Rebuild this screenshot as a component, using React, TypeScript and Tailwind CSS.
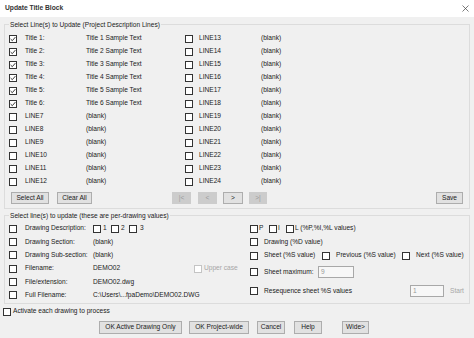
import React from "react";

function Box({ checked = false, size = "sm", disabled = false }: { checked?: boolean; size?: "sm" | "md"; disabled?: boolean }) {
  const sz = size === "sm" ? "w-[8px] h-[8px]" : "w-[8px] h-[8px]";
  const bd = disabled ? "border-[#c4c4c4]" : "border-[#333333]";
  return (
    <span className={`inline-flex shrink-0 items-center justify-center border bg-white ${sz} ${bd}`}>
      {checked && (
        <svg viewBox="0 0 6 6" className="w-[6px] h-[6px]">
          <path d="M0.6 3 L2.3 4.7 L5.4 1.1" fill="none" stroke="#222" strokeWidth="0.9" />
        </svg>
      )}
    </span>
  );
}

function Btn({ children, className = "", disabled = false }: { children: React.ReactNode; className?: string; disabled?: boolean }) {
  return (
    <div
      className={`flex items-center justify-center border leading-none ${
        disabled ? "bg-[#cccccc] border-[#cccccc] text-[#9a9a9a]" : "bg-[#e1e1e1] border-[#adadad] text-[#1a1a1a]"
      } ${className}`}
    >
      {children}
    </div>
  );
}

const group1 = [
  { c: true, l: "Title 1:", v: "Title 1 Sample Text", l2: "LINE13" },
  { c: true, l: "Title 2:", v: "Title 2 Sample Text", l2: "LINE14" },
  { c: true, l: "Title 3:", v: "Title 3 Sample Text", l2: "LINE15" },
  { c: true, l: "Title 4:", v: "Title 4 Sample Text", l2: "LINE16" },
  { c: true, l: "Title 5:", v: "Title 5 Sample Text", l2: "LINE17" },
  { c: true, l: "Title 6:", v: "Title 6 Sample Text", l2: "LINE18" },
  { c: false, l: "LINE7", v: "(blank)", l2: "LINE19" },
  { c: false, l: "LINE8", v: "(blank)", l2: "LINE20" },
  { c: false, l: "LINE9", v: "(blank)", l2: "LINE21" },
  { c: false, l: "LINE10", v: "(blank)", l2: "LINE22" },
  { c: false, l: "LINE11", v: "(blank)", l2: "LINE23" },
  { c: false, l: "LINE12", v: "(blank)", l2: "LINE24" },
];

export default function App() {
  return (
    <div className="w-[474px] h-[338px] bg-[#f0f0f0] font-['Liberation_Sans',Arial,sans-serif] text-[6.6px] text-[#1a1a1a] leading-none overflow-hidden">
      {/* Title bar */}
      <div className="h-[17px] bg-white flex items-center justify-between pl-[5px] pr-[5px]">
        <span className="font-bold text-[6.7px] text-[#333]">Update Title Block</span>
        <svg viewBox="0 0 7 7" className="w-[7px] h-[7px]">
          <path d="M0.5 0.5 L6.5 6.5 M6.5 0.5 L0.5 6.5" stroke="#444" strokeWidth="0.7" />
        </svg>
      </div>

      {/* Group 1 */}
      <fieldset className="mx-[4px] mt-[3px] border border-[#dcdcdc] pl-[4px] pr-[5px] pb-[4px]">
        <legend className="px-[1px] leading-[9px]">Select Line(s) to Update (Project Description Lines)</legend>
        <div className="pt-[3px]">
          {group1.map((r) => (
            <div key={r.l} className="grid grid-cols-[16px_61px_99px_14px_62px_1fr] h-[13px] items-center">
              <Box checked={r.c} />
              <span>{r.l}</span>
              <span>{r.v}</span>
              <Box />
              <span>{r.l2}</span>
              <span>(blank)</span>
            </div>
          ))}
        </div>
        <div className="mt-[4px] h-[12px] flex">
          <Btn className="ml-[2px] w-[38px]">Select All</Btn>
          <Btn className="ml-[8px] w-[35px]">Clear All</Btn>
          <Btn disabled className="ml-[80px] w-[19px]">|&lt;</Btn>
          <Btn disabled className="ml-[7px] w-[19px]">&lt;</Btn>
          <Btn className="ml-[6px] w-[20px]">&gt;</Btn>
          <Btn disabled className="ml-[6px] w-[18px]">&gt;|</Btn>
          <Btn className="ml-auto mr-[1px] w-[27px]">Save</Btn>
        </div>
      </fieldset>

      {/* Group 2 */}
      <fieldset className="mx-[4px] mt-[2px] border border-[#dcdcdc] pl-[4px] pr-[5px] pb-[1px]">
        <legend className="px-[1px] leading-[9px]">Select line(s) to update (these are per-drawing values)</legend>
        <div className="pt-[2px] flex">
          <div className="w-[241px] grid grid-cols-[16px_68px_101px_1fr] auto-rows-[13.3px] items-center">
            <Box size="md" />
            <span>Drawing Description:</span>
            <span className="flex items-center">
              <Box size="sm" />
              <span className="ml-[2px] w-[8px]">1</span>
              <Box size="sm" />
              <span className="ml-[2px] w-[8px]">2</span>
              <Box size="sm" />
              <span className="ml-[3px]">3</span>
            </span>
            <span />

            <Box size="md" />
            <span>Drawing Section:</span>
            <span>(blank)</span>
            <span />

            <Box size="md" />
            <span>Drawing Sub-section:</span>
            <span>(blank)</span>
            <span />

            <Box size="md" />
            <span>Filename:</span>
            <span>DEMO02</span>
            <span className="flex items-center text-[#a6a6a6]">
              <Box size="md" disabled />
              <span className="ml-[2px]">Upper case</span>
            </span>

            <Box size="md" />
            <span>File/extension:</span>
            <span>DEMO02.dwg</span>
            <span />

            <Box size="md" />
            <span>Full Filename:</span>
            <span className="col-span-2">C:\Users\...fpaDemo\DEMO02.DWG</span>
          </div>

          <div className="flex-1 flex flex-col">
            <div className="h-[13px] flex items-center">
              <span className="w-[19px] flex items-center">
                <Box size="sm" />
                <span className="ml-[1px]">P</span>
              </span>
              <span className="w-[17px] flex items-center">
                <Box size="sm" />
                <span className="ml-[1px]">I</span>
              </span>
              <span className="flex items-center">
                <Box size="sm" />
                <span className="ml-[1px]">L (%P,%I,%L values)</span>
              </span>
            </div>
            <div className="h-[14px] flex items-center">
              <Box size="md" />
              <span className="ml-[6px]">Drawing (%D value)</span>
            </div>
            <div className="h-[13px] flex items-center">
              <span className="w-[72px] flex items-center">
                <Box size="md" />
                <span className="ml-[6px]">Sheet (%S value)</span>
              </span>
              <span className="w-[80px] flex items-center">
                <Box size="md" />
                <span className="ml-[6px]">Previous (%S value)</span>
              </span>
              <span className="flex items-center">
                <Box size="md" />
                <span className="ml-[6px]">Next (%S value)</span>
              </span>
            </div>
            <div className="mt-[4px] h-[12px] flex items-center">
              <Box size="md" />
              <span className="ml-[6px] w-[54px]">Sheet maximum:</span>
              <span className="w-[36px] h-[12px] border border-[#a8a8a8] bg-[#f7f7f7] text-[#9a9a9a] flex items-center pl-[2px]">9</span>
            </div>
            <div className="mt-[7px] h-[12px] flex items-center">
              <Box size="md" />
              <span className="ml-[6px] w-[146px]">Resequence sheet %S values</span>
              <span className="w-[34px] h-[12px] border border-[#a8a8a8] bg-[#f7f7f7] text-[#9a9a9a] flex items-center pl-[2px]">1</span>
              <span className="ml-[6px] text-[#a6a6a6]">Start</span>
            </div>
          </div>
        </div>
      </fieldset>

      {/* Activate */}
      <div className="mt-[2px] h-[12px] pl-[3px] flex items-center">
        <Box size="md" />
        <span className="ml-[2px]">Activate each drawing to process</span>
      </div>

      {/* Bottom buttons */}
      <div className="mt-[3px] h-[13px] flex pl-[99px]">
        <Btn className="w-[83px]">OK Active Drawing Only</Btn>
        <Btn className="ml-[7px] w-[60px]">OK Project-wide</Btn>
        <Btn className="ml-[8px] w-[28px]">Cancel</Btn>
        <Btn className="ml-[9px] w-[28px]">Help</Btn>
        <Btn className="ml-[20px] w-[27px]">Wide&gt;</Btn>
      </div>
    </div>
  );
}
